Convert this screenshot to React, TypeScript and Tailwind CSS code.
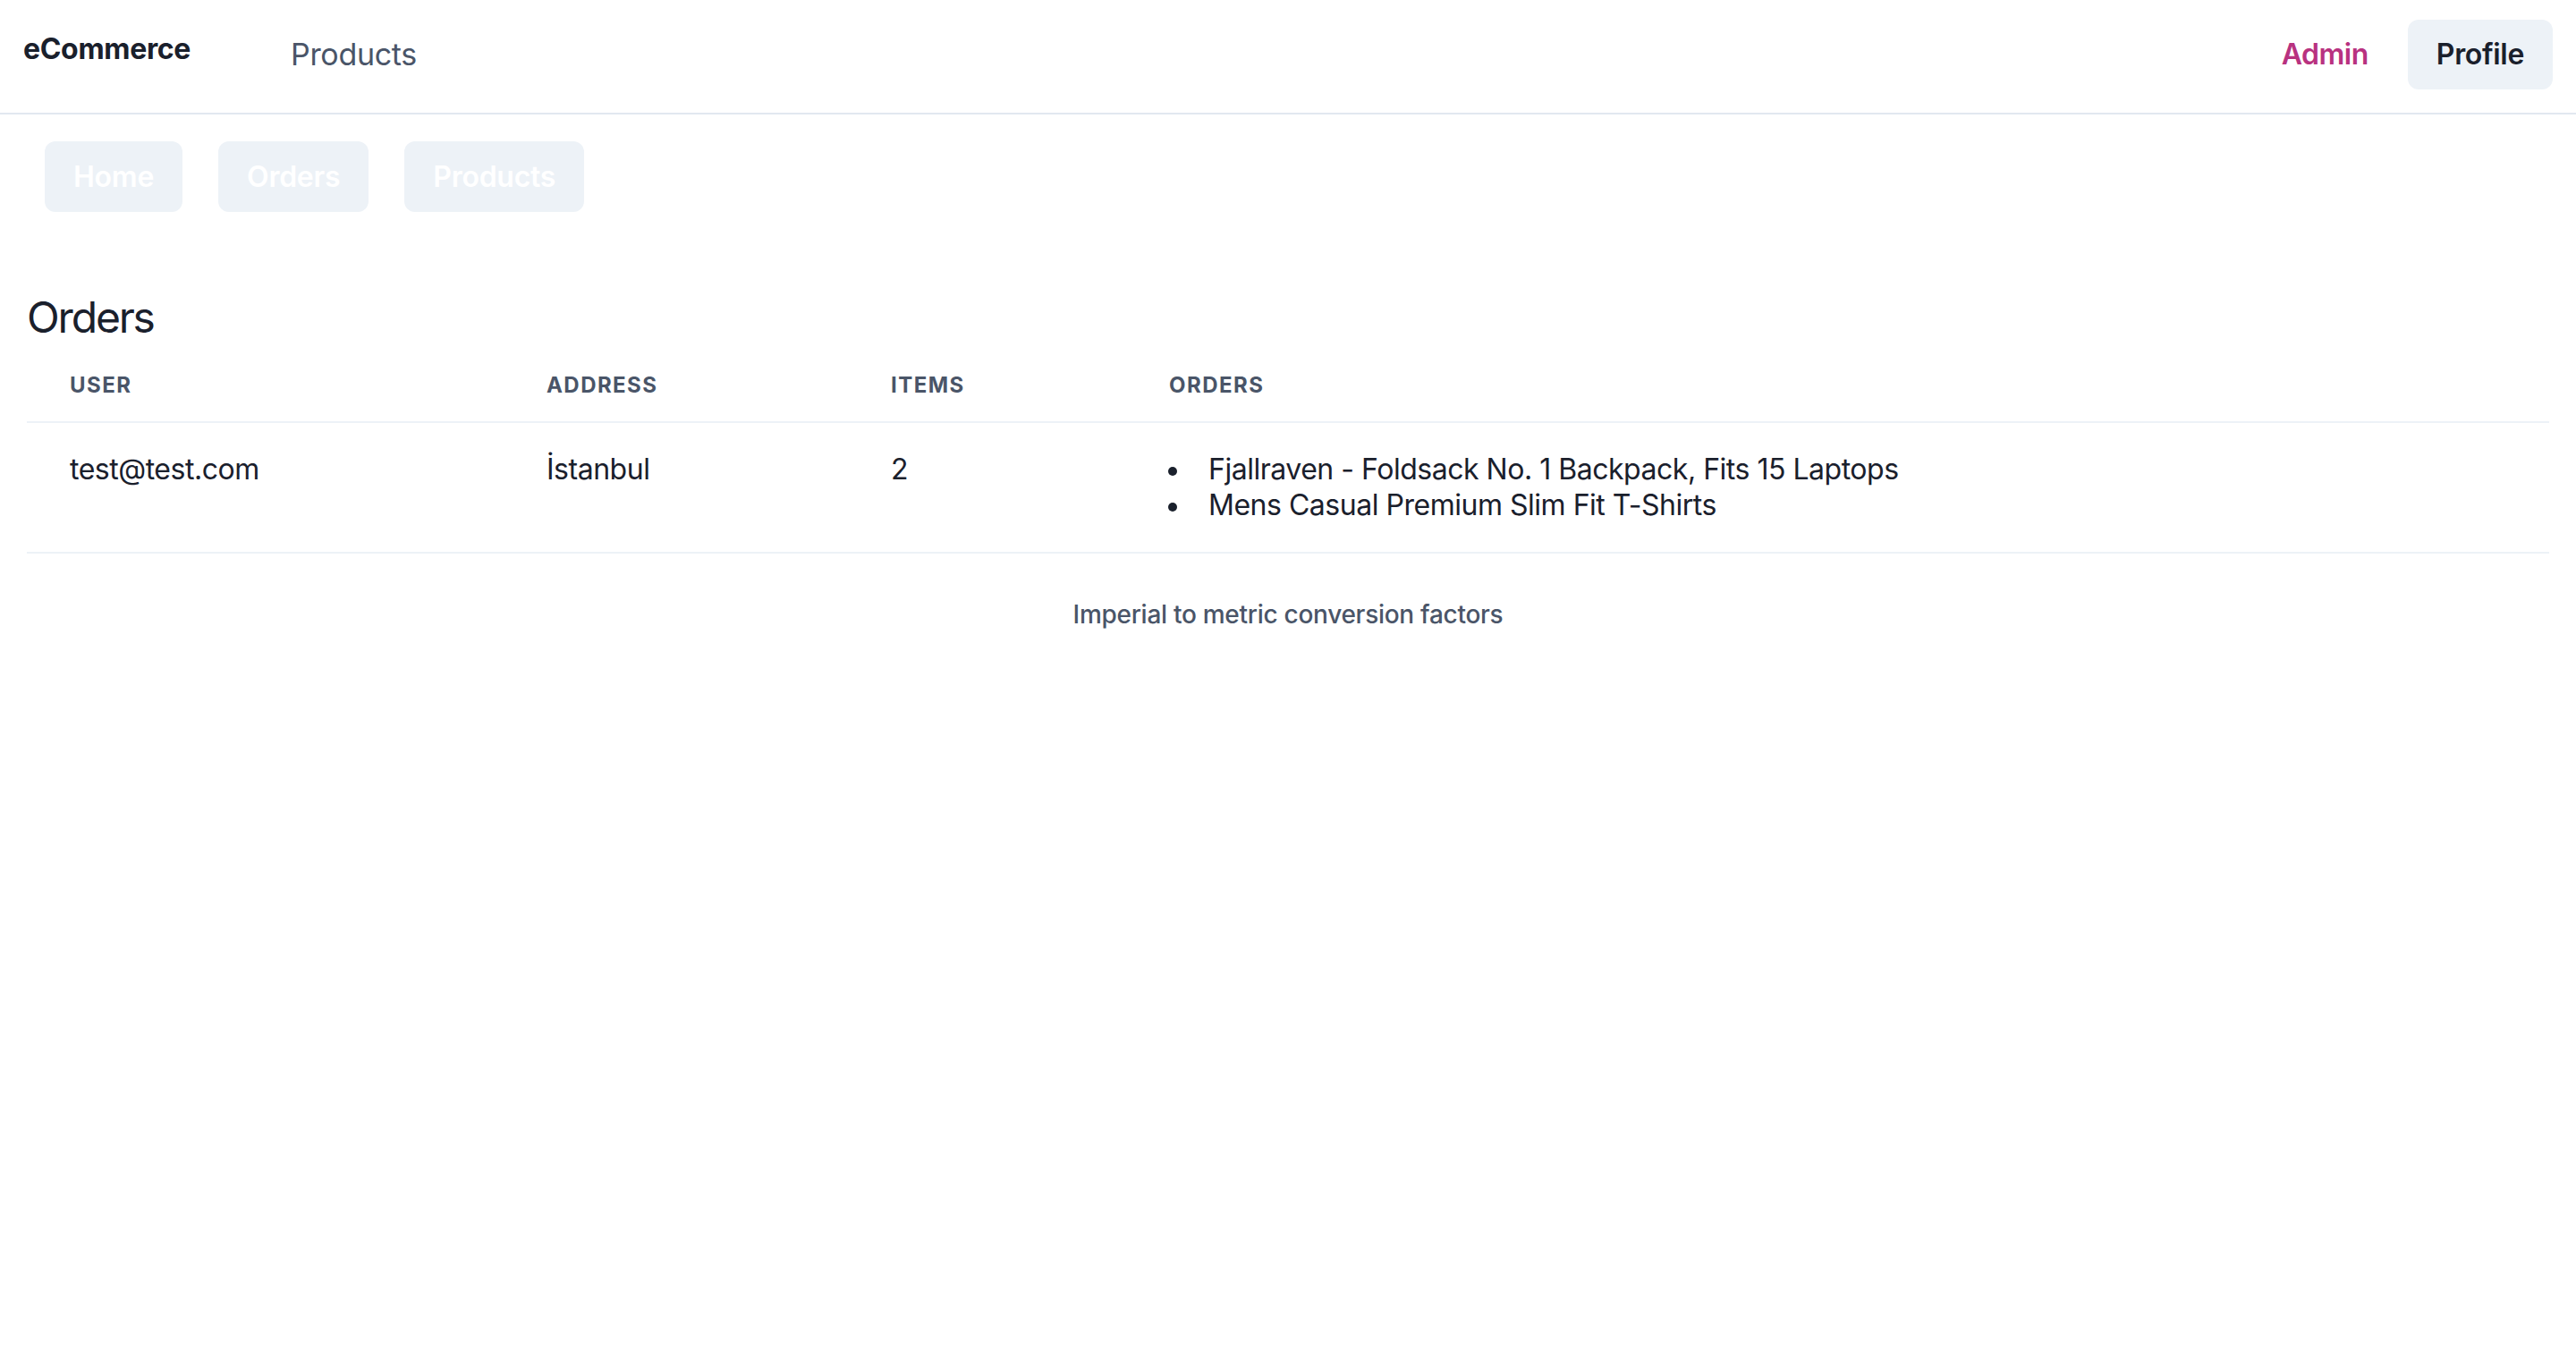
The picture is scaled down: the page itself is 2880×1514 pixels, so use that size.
import React from "react";

const navButtons = ["Home", "Orders", "Products"];
const orderItems = [
  "Fjallraven - Foldsack No. 1 Backpack, Fits 15 Laptops",
  "Mens Casual Premium Slim Fit T-Shirts",
];

export default function App() {
  return (
    <div className="min-h-screen bg-white font-['Inter','Noto_Sans',sans-serif] text-[#1a202c]">
      <header className="flex h-[128px] items-center justify-between border-b-2 border-[#e2e8f0] px-[26px] pb-[4px]">
        <div className="flex items-center">
          <span className="mb-[12px] text-[32px] font-bold leading-[40px] tracking-[-0.01em] text-[#1a202c]">
            eCommerce
          </span>
          <a className="ml-[112px] text-[34px] leading-[40px] tracking-[-0.01em] text-[#4a5568]">Products</a>
        </div>
        <div className="flex items-center">
          <a className="mr-[44px] text-[32px] font-semibold leading-[40px] tracking-[-0.015em] text-[#b83280]">
            Admin
          </a>
          <button className="h-[78px] rounded-[12px] bg-[#edf2f7] px-[32px] text-[32px] font-semibold tracking-[-0.01em] text-[#1a202c]">
            Profile
          </button>
        </div>
      </header>

      <nav className="flex gap-[40px] pl-[50px] pt-[30px]">
        {navButtons.map((b) => (
          <button
            key={b}
            className="h-[79px] rounded-[12px] bg-[#edf2f7] px-[32px] text-[32px] font-semibold tracking-[-0.008em] text-white"
          >
            {b}
          </button>
        ))}
      </nav>

      <main className="px-[30px]">
        <h2 className="mt-[89px] text-[48px] font-normal leading-[58px] tracking-[-0.045em] text-[#1a202c]">
          Orders
        </h2>
        <table className="mt-[7px] w-full table-fixed border-collapse">
          <colgroup>
            <col className="w-[533px]" />
            <col className="w-[385px]" />
            <col className="w-[311px]" />
            <col />
          </colgroup>
          <thead>
            <tr className="border-b-2 border-[#edf2f7]">
              {["User", "Address", "Items", "Orders"].map((h) => (
                <th
                  key={h}
                  className="px-[48px] py-[24px] text-left text-[24px] font-bold uppercase leading-[32px] tracking-[0.06em] text-[#4a5568]"
                >
                  {h}
                </th>
              ))}
            </tr>
          </thead>
          <tbody>
            <tr className="border-b-2 border-[#edf2f7] align-top text-[32px] leading-[40px] tracking-[-0.015em]">
              <td className="px-[48px] py-[32px]">test@test.com</td>
              <td className="px-[48px] py-[32px]">İstanbul</td>
              <td className="px-[48px] py-[32px]">2</td>
              <td className="px-[48px] py-[32px]">
                <ul>
                  {orderItems.map((item) => (
                    <li key={item} className="flex">
                      <span className="flex h-[40px] w-[44px] shrink-0 items-center pt-[3px]">
                        <span className="ml-[-1px] h-[10px] w-[10px] rounded-full bg-[#1a202c]" />
                      </span>
                      <span>{item}</span>
                    </li>
                  ))}
                </ul>
              </td>
            </tr>
          </tbody>
          <caption className="caption-bottom mt-[32px] px-[48px] py-[16px] text-center text-[28px] font-medium leading-[40px] tracking-[-0.01em] text-[#4a5568]">
            Imperial to metric conversion factors
          </caption>
        </table>
      </main>
    </div>
  );
}
